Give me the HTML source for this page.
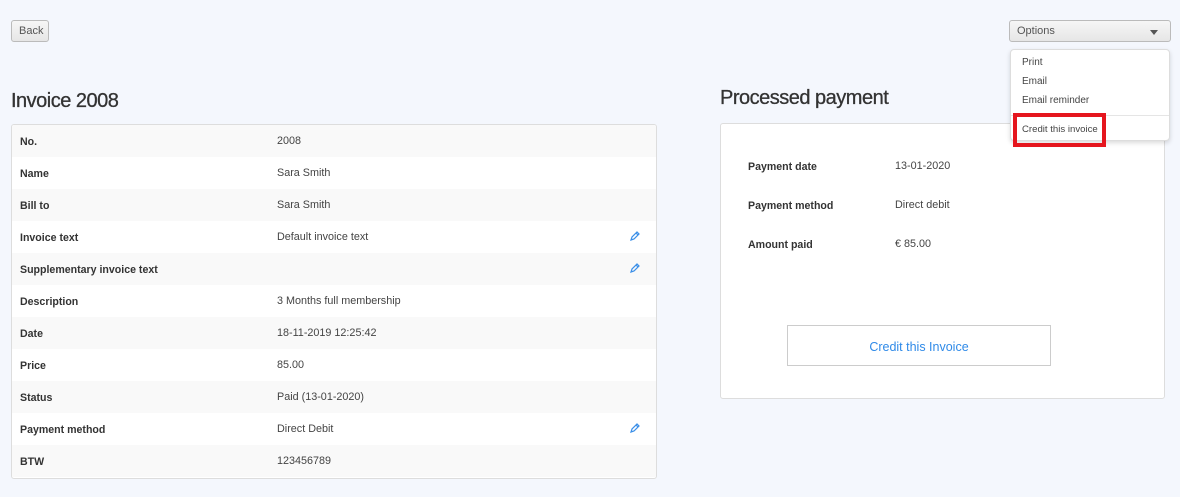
<!DOCTYPE html>
<html><head><style>
body{margin:0;width:1180px;height:497px;background:#f4f7fd;font-family:"Liberation Sans",Arial,sans-serif;position:relative;overflow:hidden;color:#333}
.btn{position:absolute;border:1px solid #bbb;border-radius:3px;background:linear-gradient(#f6f6f6,#e6e6e6);font-size:11px;color:#555;box-sizing:border-box}
h2{position:absolute;margin:0;font-weight:normal;font-size:20px;color:#333;font-family:"Liberation Sans",sans-serif;letter-spacing:-0.5px;-webkit-text-stroke:0.3px #333}
.tbl{position:absolute;left:11px;top:124px;width:646px;height:355px;border:1px solid #ddd;border-radius:3px;background:#fff;box-sizing:border-box;overflow:hidden}
.row{height:32px;position:relative;font-size:11px}
.row:nth-child(odd){background:#f9f9f9}
.row b{position:absolute;left:8px;top:11px;font-weight:bold;color:#333;font-size:10.6px}
.row span{position:absolute;left:265px;top:10px;color:#444;font-size:10.8px}
.row svg{position:absolute;left:617px;top:9px}
.panel{position:absolute;left:720px;top:123px;width:445px;height:276px;background:#fff;border:1px solid #ddd;border-radius:3px;box-sizing:border-box}
.pl{position:absolute;left:27px;font-size:10.6px;font-weight:bold;color:#333}
.pv{position:absolute;left:174px;font-size:10.8px;color:#444}
.menu{position:absolute;left:1010px;top:49px;width:160px;height:92px;background:#fff;border:1px solid #ddd;border-radius:4px;box-shadow:0 2px 5px rgba(0,0,0,.15);box-sizing:border-box;font-size:10px;color:#444}
.menu div{position:absolute;left:11px}
</style></head><body>
<div class="btn" style="left:11px;top:20px;width:38px;height:22px;padding:4px 0 0 7px">Back</div>
<h2 style="left:11px;top:90px">Invoice 2008</h2>
<h2 style="left:720px;top:87px">Processed payment</h2>
<div class="tbl">
<div class="row"><b>No.</b><span>2008</span></div>
<div class="row"><b>Name</b><span>Sara Smith</span></div>
<div class="row"><b>Bill to</b><span>Sara Smith</span></div>
<div class="row"><b>Invoice text</b><span>Default invoice text</span><svg width="12" height="12" viewBox="0 0 12 12"><path d="M2 10l1-3 5-5 2 2-5 5zM7 3l2 2" fill="none" stroke="#3b8fe8" stroke-width="1.2"/></svg></div>
<div class="row"><b>Supplementary invoice text</b><span></span><svg width="12" height="12" viewBox="0 0 12 12"><path d="M2 10l1-3 5-5 2 2-5 5zM7 3l2 2" fill="none" stroke="#3b8fe8" stroke-width="1.2"/></svg></div>
<div class="row"><b>Description</b><span>3 Months full membership</span></div>
<div class="row"><b>Date</b><span>18-11-2019 12:25:42</span></div>
<div class="row"><b>Price</b><span>85.00</span></div>
<div class="row"><b>Status</b><span>Paid (13-01-2020)</span></div>
<div class="row"><b>Payment method</b><span>Direct Debit</span><svg width="12" height="12" viewBox="0 0 12 12"><path d="M2 10l1-3 5-5 2 2-5 5zM7 3l2 2" fill="none" stroke="#3b8fe8" stroke-width="1.2"/></svg></div>
<div class="row"><b>BTW</b><span>123456789</span></div>
</div>
<div class="panel">
<div class="pl" style="top:37px">Payment date</div><div class="pv" style="top:36px">13-01-2020</div>
<div class="pl" style="top:76px">Payment method</div><div class="pv" style="top:75px">Direct debit</div>
<div class="pl" style="top:115px">Amount paid</div><div class="pv" style="top:114px">€ 85.00</div>
<div style="position:absolute;left:66px;top:201px;width:264px;height:41px;border:1px solid #ccc;box-sizing:border-box;text-align:center;line-height:42px;font-size:12.5px;color:#2f8ae8">Credit this Invoice</div>
</div>
<div class="btn" style="left:1009px;top:20px;width:162px;height:22px;padding:4px 0 0 7px">Options<span style="position:absolute;right:12px;top:9px;border:4px solid transparent;border-top:5px solid #555;border-bottom:0"></span></div>
<div class="menu">
<div style="top:7px">Print</div>
<div style="top:26px">Email</div>
<div style="top:45px">Email reminder</div>
<div style="left:0;right:0;top:65px;border-top:1px solid #e5e5e5"></div>
<div style="top:74px;font-size:9.6px">Credit this invoice</div>
</div>
<div style="position:absolute;left:1013px;top:113px;width:93px;height:34px;border:4px solid #e5161e;box-sizing:border-box"></div>
</body></html>
